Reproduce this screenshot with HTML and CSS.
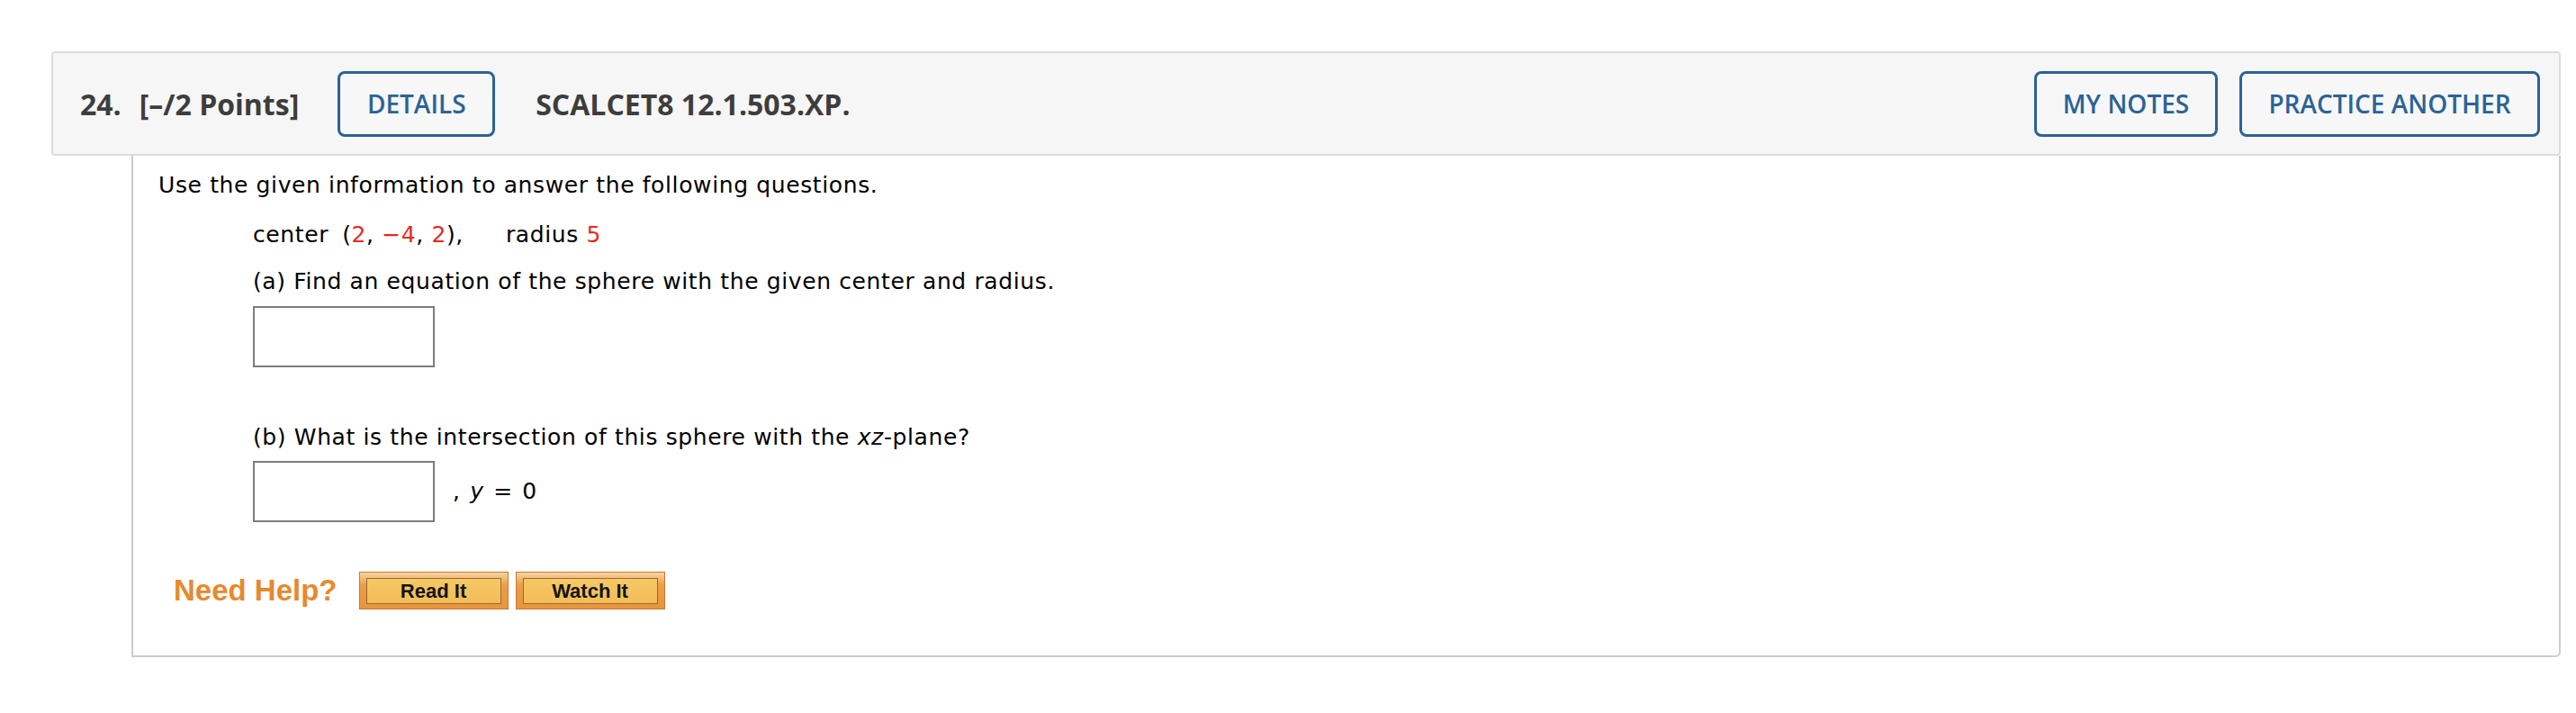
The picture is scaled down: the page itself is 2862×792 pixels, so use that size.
FILE: index.html
```html
<!DOCTYPE html>
<html lang="en">
<head>
<meta charset="utf-8">
<title>Question 24</title>
<link rel="stylesheet" href="styles.css">
</head>
<body>
<div class="question">
  <div class="qhead">
    <span class="qnum">24.</span>
    <span class="qpts">[–/2 Points]</span>
    <button class="obtn details">DETAILS</button>
    <span class="qcode">SCALCET8 12.1.503.XP.</span>
    <div class="hright">
      <button class="obtn notes">MY NOTES</button>
      <button class="obtn practice">PRACTICE ANOTHER</button>
    </div>
  </div>
  <div class="qbody">
    <p class="intro">Use the given information to answer the following questions.</p>
    <p class="given">center<span class="sp1"></span>(<span class="red">2</span>, <span class="red">−4</span>, <span class="red">2</span>),<span class="sp2"></span>radius <span class="red">5</span></p>
    <p class="part pa">(a) Find an equation of the sphere with the given center and radius.</p>
    <div class="ansrow ra"><span class="answer"></span></div>
    <p class="part pb">(b) What is the intersection of this sphere with the <i>xz</i>-plane?</p>
    <div class="ansrow rb"><span class="answer"></span><span class="after">, <i>y</i> = 0</span></div>
    <div class="help">
      <span class="needhelp">Need Help?</span>
      <span class="hbtn"><span class="hin">Read It</span></span>
      <span class="hbtn"><span class="hin">Watch It</span></span>
    </div>
  </div>
</div>
</body>
</html>
```
FILE: styles.css
```css
html, body {
  margin: 0;
  padding: 0;
  background: #ffffff;
}
.question {
  padding: 57px 17px 0 57px;
}
.qhead {
  box-sizing: border-box;
  height: 116px;
  background: #f6f6f6;
  border: 2px solid #dddddd;
  border-radius: 4px;
  display: flex;
  align-items: center;
  padding: 0 21px 0 30px;
  font-family: "Open Sans", sans-serif;
  color: #3d3d3d;
}
.qnum {
  font-size: 32px;
  font-weight: 700;
}
.qpts {
  font-size: 32px;
  font-weight: 700;
  margin-left: 20px;
}
.qcode {
  font-size: 32px;
  font-weight: 700;
  margin-left: 45px;
}
.obtn {
  box-sizing: border-box;
  height: 73px;
  border: 3.5px solid #2b6396;
  border-radius: 8px;
  background: #f7f7f7;
  color: #2b6396;
  font-family: "Open Sans", sans-serif;
  font-size: 28px;
  font-weight: 600;
  padding: 0;
  display: flex;
  align-items: center;
  justify-content: center;
}
.details {
  width: 175px;
  margin-left: 43px;
}
.hright {
  margin-left: auto;
  display: flex;
  gap: 24px;
}
.notes {
  width: 204px;
}
.practice {
  width: 334px;
}
.qbody {
  box-sizing: border-box;
  margin-left: 89px;
  height: 557px;
  border: 2px solid #cccccc;
  border-top: none;
  border-radius: 0 0 6px 0;
  padding: 17px 0 0 28px;
  font-family: "DejaVu Sans", Verdana, sans-serif;
  font-size: 25px;
  letter-spacing: 0.62px;
  line-height: 32px;
  color: #000000;
  display: flex;
  flex-direction: column;
  align-items: flex-start;
}
.qbody p {
  margin: 0;
}
.red {
  color: #e8291f;
}
.given {
  margin-top: 23px !important;
  margin-left: 105px !important;
}
.sp1 {
  display: inline-block;
  width: 15px;
}
.sp2 {
  display: inline-block;
  width: 47px;
}
.part {
  margin-left: 105px !important;
}
.pa {
  margin-top: 20px !important;
}
.pb {
  margin-top: 62px !important;
}
.ansrow {
  margin-left: 105px;
  display: flex;
  align-items: center;
}
.ra {
  margin-top: 11px;
}
.rb {
  margin-top: 10px;
}
.answer {
  box-sizing: border-box;
  width: 202px;
  height: 68px;
  border: 2px solid #7c7c7c;
  background: #ffffff;
}
.after {
  margin-left: 20px;
  word-spacing: 2px;
}
.help {
  margin-top: 55px;
  margin-left: 17px;
  display: flex;
  align-items: center;
}
.needhelp {
  font-family: "Liberation Sans", Arial, sans-serif;
  font-weight: 700;
  font-size: 33px;
  letter-spacing: 0;
  color: #e58a2e;
  margin-right: 24px;
  line-height: 42px;
}
.hbtn {
  box-sizing: border-box;
  width: 166px;
  height: 42px;
  padding: 6px 7px 5px 7px;
  background: linear-gradient(#f7d4a3 0%, #eb9d48 35%, #e8953c 100%);
  border: 1px solid #c27a30;
  display: flex;
  margin-right: 8px;
}
.hin {
  flex: 1;
  box-sizing: border-box;
  border: 1px solid #9a6a34;
  background: linear-gradient(#f6c866, #f2bd58);
  display: flex;
  align-items: center;
  justify-content: center;
  font-family: "Liberation Sans", Arial, sans-serif;
  font-weight: 700;
  font-size: 22px;
  letter-spacing: 0;
  color: #141414;
}
```
